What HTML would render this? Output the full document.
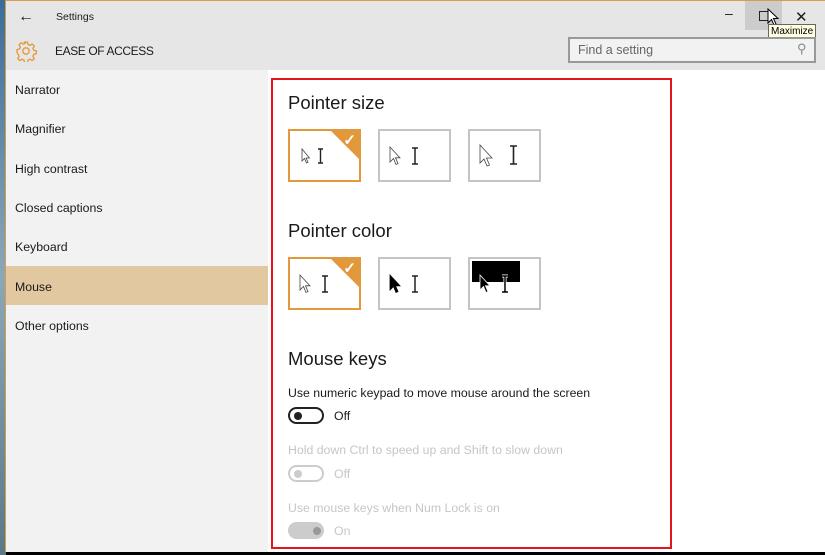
<!DOCTYPE html>
<html><head><meta charset="utf-8"><style>
*{margin:0;padding:0;box-sizing:border-box}
body{width:825px;height:555px;overflow:hidden;position:relative;font-family:"Liberation Sans",sans-serif;background:#000;}
.a{position:absolute}
.t{font-size:12.3px;color:#1a1a1a;white-space:nowrap}
.box{position:absolute;width:73px;height:53px;border:2px solid #c4c4c4;background:#fff;overflow:hidden}
.sel{border-color:#e2993b}
.sel:after{content:"";position:absolute;right:-2px;top:-2px;border-top:32px solid #e2993b;border-left:32px solid transparent}
.ck{position:absolute;right:3px;top:0px;color:#fff;font-size:15px;z-index:2;font-weight:bold}
.h{font-size:18.5px;color:#1a1a1a}
.tog{position:absolute;width:36px;height:17px;border:2px solid #222;border-radius:9px}
.tog i{position:absolute;left:4px;top:3px;width:8px;height:8px;border-radius:50%;background:#222}
</style></head><body>
<div class="a" style="left:0;top:0;width:6px;height:555px;background:linear-gradient(#3a6d9a,#8aa8b8 50%,#5a7a88)"></div>
<div class="a" style="left:5px;top:0;width:820px;height:552px;background:#fff;border-left:1px solid #d99a4a;border-top:1px solid #d99a4a"></div>
<div class="a" style="left:6px;top:1px;width:819px;height:69px;background:#e6e6e6"></div>
<div class="a" style="left:745px;top:1px;width:37px;height:29px;background:#cccccc"></div>
<div class="a t" style="left:18px;top:8px;font-size:16px">&#8592;</div>
<div class="a t" style="left:56px;top:11px;font-size:10.5px">Settings</div>
<div class="a t" style="left:725px;top:5px;font-size:14px">&#8211;</div>
<div class="a" style="left:759px;top:11px;width:10px;height:10px;border:1px solid #222"></div>
<div class="a t" style="left:795px;top:8px;font-size:15px">&#10005;</div>
<svg class="a" style="left:767px;top:8px" width="14" height="18" viewBox="0 0 14 18"><path d="M1 1 L1 15 L4.5 11.5 L7 17 L9 16 L6.5 10.5 L11 10.5 Z" fill="#fff" stroke="#000"/></svg>
<div class="a" style="left:768px;top:24px;width:48px;height:16px;background:#ffffe1;border:1px solid #666;font-size:10px;padding:1px 2px;color:#000">Maximize</div>
<svg class="a" style="left:15px;top:40px" width="22" height="22" viewBox="0 0 22 22"><g fill="none" stroke="#e2993b" stroke-width="1.3"><circle cx="11" cy="11" r="3.2"/><path d="M9.5 2h3l.5 2.5 2 .9 2.2-1.4 2.1 2.1-1.4 2.2.9 2 2.5.5v3l-2.5.5-.9 2 1.4 2.2-2.1 2.1-2.2-1.4-2 .9-.5 2.5h-3l-.5-2.5-2-.9-2.2 1.4-2.1-2.1 1.4-2.2-.9-2L2 12.5v-3l2.5-.5.9-2L4 4.8 6.1 2.7l2.2 1.4 2-.9z"/></g></svg>
<div class="a t" style="left:55px;top:44px;font-size:12px;letter-spacing:-.4px">EASE OF ACCESS</div>
<div class="a" style="left:568px;top:37px;width:248px;height:26px;border:2px solid #999;background:#f2f2f2"></div>
<div class="a t" style="left:578px;top:43px;color:#666;font-size:12.5px">Find a setting</div>
<div class="a t" style="left:797px;top:41px;color:#888;font-size:13px">&#9906;</div>
<div class="a" style="left:6px;top:70px;width:262px;height:482px;background:#f2f2f2"></div>
<div class="a" style="left:6px;top:266px;width:262px;height:39px;background:#e2c8a0"></div>
<div class="a t" style="left:15px;top:83px">Narrator</div>
<div class="a t" style="left:15px;top:122px">Magnifier</div>
<div class="a t" style="left:15px;top:162px">High contrast</div>
<div class="a t" style="left:15px;top:201px">Closed captions</div>
<div class="a t" style="left:15px;top:240px">Keyboard</div>
<div class="a t" style="left:15px;top:280px">Mouse</div>
<div class="a t" style="left:15px;top:319px">Other options</div>
<div class="a" style="left:271px;top:78px;width:401px;height:471px;border:2px solid #e3141c"></div>
<div class="a h" style="left:288px;top:92px">Pointer size</div>
<div class="box sel" style="left:288px;top:129px"><span class="ck">&#10003;</span>
<svg class="a" style="left:10px;top:16px" width="30" height="20"><path d="M2 2 L2 14 L4.5 11.5 L6.5 16 L8 15.3 L6 11 L9.5 11 Z" fill="#fff" stroke="#444" stroke-width=".8"/><path d="M18 2h5M20.5 2v14M18 16h5" stroke="#222" stroke-width="1.4" fill="none"/></svg></div>
<div class="box" style="left:378px;top:129px"><svg class="a" style="left:8px;top:14px" width="40" height="24"><path d="M2 2 L2 17 L5.5 13.5 L8 19.5 L10 18.6 L7.5 12.8 L12 12.8 Z" fill="#fff" stroke="#444" stroke-width=".8"/><path d="M24 3h6M27 3v16M24 19h6" stroke="#222" stroke-width="1.5" fill="none"/></svg></div>
<div class="box" style="left:468px;top:129px"><svg class="a" style="left:8px;top:12px" width="44" height="28"><path d="M2 2 L2 20 L6 16 L9 23 L11.5 22 L8.5 15 L14 15 Z" fill="#fff" stroke="#444" stroke-width=".8"/><path d="M32 3h7M35.5 3v18M32 21h7" stroke="#222" stroke-width="1.6" fill="none"/></svg></div>
<div class="a h" style="left:288px;top:220px">Pointer color</div>
<div class="box sel" style="left:288px;top:257px"><span class="ck">&#10003;</span>
<svg class="a" style="left:8px;top:14px" width="40" height="24"><path d="M2 2 L2 17 L5.5 13.5 L8 19.5 L10 18.6 L7.5 12.8 L12 12.8 Z" fill="#fff" stroke="#444" stroke-width=".8"/><path d="M24 3h6M27 3v16M24 19h6" stroke="#222" stroke-width="1.5" fill="none"/></svg></div>
<div class="box" style="left:378px;top:257px"><svg class="a" style="left:8px;top:14px" width="40" height="24"><path d="M2 2 L2 17 L5.5 13.5 L8 19.5 L10 18.6 L7.5 12.8 L12 12.8 Z" fill="#000" stroke="#000" stroke-width=".8"/><path d="M24 3h6M27 3v16M24 19h6" stroke="#222" stroke-width="1.5" fill="none"/></svg></div>
<div class="box" style="left:468px;top:257px"><div class="a" style="left:2px;top:2px;width:48px;height:21px;background:#000"></div><svg class="a" style="left:8px;top:14px" width="40" height="24"><path d="M2 2 L2 17 L5.5 13.5 L8 19.5 L10 18.6 L7.5 12.8 L12 12.8 Z" fill="#000" stroke="#fff" stroke-width=".8"/><path d="M24 3h6M27 3v16M24 19h6" stroke="#fff" stroke-width="3" fill="none"/><path d="M24 3h6M27 3v16M24 19h6" stroke="#000" stroke-width="1.5" fill="none"/></svg></div>
<div class="a h" style="left:288px;top:348px">Mouse keys</div>
<div class="a t" style="left:288px;top:386px">Use numeric keypad to move mouse around the screen</div>
<div class="tog" style="left:288px;top:407px"><i></i></div>
<div class="a t" style="left:334px;top:409px">Off</div>
<div class="a t" style="left:288px;top:443px;color:#c6c6c6">Hold down Ctrl to speed up and Shift to slow down</div>
<div class="tog" style="left:288px;top:465px;border-color:#ccc"><i style="background:#ccc"></i></div>
<div class="a t" style="left:334px;top:467px;color:#c6c6c6">Off</div>
<div class="a t" style="left:288px;top:501px;color:#c6c6c6">Use mouse keys when Num Lock is on</div>
<div class="tog" style="left:288px;top:522px;border-color:#ccc;background:#ccc"><i style="left:23px;background:#999"></i></div>
<div class="a t" style="left:334px;top:524px;color:#c6c6c6">On</div>
</body></html>
